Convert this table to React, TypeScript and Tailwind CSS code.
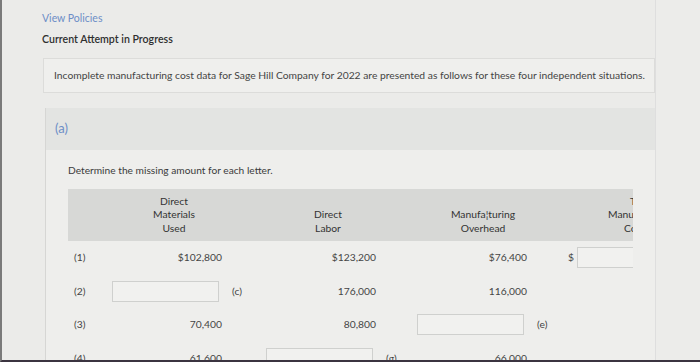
import React from "react";

type Cell = { value?: string; input?: boolean; letter?: string };

const rows: { label: string; cells: Cell[]; total?: boolean }[] = [
  {
    label: "(1)",
    cells: [{ value: "$102,800" }, { value: "$123,200" }, { value: "$76,400" }],
    total: true,
  },
  {
    label: "(2)",
    cells: [{ input: true, letter: "(c)" }, { value: "176,000" }, { value: "116,000" }],
  },
  {
    label: "(3)",
    cells: [{ value: "70,400" }, { value: "80,800" }, { input: true, letter: "(e)" }],
  },
  {
    label: "(4)",
    cells: [{ value: "61,600" }, { input: true, letter: "(g)" }, { value: "66,000" }],
  },
];

const widths = ["w-[114px]", "w-[113px]", "w-[110px]"];
const letterWidths = ["w-[41px]", "w-[41px]", "w-[38px]"];

function AmountInput({ className }: { className: string }) {
  return (
    <input
      type="text"
      className={`h-[21px] shrink-0 border border-[#cfd0ce] bg-[#f1f1ef] outline-none ${className}`}
    />
  );
}

export default function App() {
  return (
    <div className="h-[362px] w-[700px] overflow-hidden border-b-2 border-l-2 border-b-[#3b3440] border-l-[#7a7a7a] bg-[#ebebe9] font-['Lato',sans-serif] text-[#3b3b3b]">
      <div className="flex h-full">
        <div className="w-[653px] shrink-0 pl-[40px] pt-[12px]">
          <div className="text-[10.5px] leading-[12px] text-[#6d8ec7]">View Policies</div>
          <div className="mt-[9px] text-[10.6px] font-semibold leading-[12px] text-[#2f2f2f]">
            Current Attempt in Progress
          </div>

          {/* Intro */}
          <div className="ml-[1px] mt-[13px] flex h-[35px] items-center border border-[#dcdcda] bg-[#efefed] pl-[10px] text-[10.3px] text-[#444]">
            Incomplete manufacturing cost data for Sage Hill Company for 2022 are presented as follows for these four independent situations.
          </div>

          {/* Part (a) */}
          <div className="ml-[3px] mt-[15px] border-l border-[#d6d6d4]">
            <div className="flex h-[42px] items-center bg-[#e3e4e2] pl-[9px] text-[13px] text-[#6d8ec7]">(a)</div>
            <div className="h-[230px] bg-[#eeeeec] pl-[22px] pt-[14px]">
              <div className="text-[10.2px] leading-[12px] text-[#3b3b3b]">
                Determine the missing amount for each letter.
              </div>

              <div className="mt-[13px] w-[565px] overflow-hidden">
                {/* Header */}
                <div className="flex h-[52px] w-[640px] items-center bg-[#d7d8d6] text-[10.3px] leading-[13.5px] text-[#333]">
                  <div className="w-[40px] shrink-0" />
                  <div className="w-[132px] shrink-0 text-center">
                    Direct
                    <br />
                    Materials
                    <br />
                    Used
                  </div>
                  <div className="w-[176px] shrink-0 pt-[13px] text-center">
                    Direct
                    <br />
                    Labor
                  </div>
                  <div className="w-[134px] shrink-0 pt-[13px] text-center">
                    Manufa¦turing
                    <br />
                    Overhead
                  </div>
                  <div className="w-[158px] shrink-0 pl-[58px] text-left">
                    <span className="block pl-[22px]">T</span>
                    Manufacturing
                    <br />
                    <span className="pl-[16px]">Costs</span>
                  </div>
                </div>

                {/* Rows */}
                {rows.map((row) => (
                  <div key={row.label} className="flex h-[33.5px] w-[640px] items-center text-[10.3px] text-[#444]">
                    <div className="w-[40px] shrink-0 pl-[6px]">{row.label}</div>
                    {row.cells.map((cell, i) => (
                      <React.Fragment key={i}>
                        <div className={`${widths[i]} flex shrink-0 justify-end`}>
                          {cell.input ? (
                            <AmountInput className="mr-[3px] w-[107px]" />
                          ) : (
                            <span>{cell.value}</span>
                          )}
                        </div>
                        <div className={`${letterWidths[i]} shrink-0 pl-[10px]`}>{cell.letter}</div>
                      </React.Fragment>
                    ))}
                    {row.total && (
                      <div className="flex shrink-0 items-center pl-[3px]">
                        <span className="mr-[3px]">$</span>
                        <AmountInput className="w-[80px]" />
                      </div>
                    )}
                  </div>
                ))}
              </div>
            </div>
          </div>
        </div>
        <div className="h-full flex-1 border-l border-[#dedede] bg-[#ececea]" />
      </div>
    </div>
  );
}
